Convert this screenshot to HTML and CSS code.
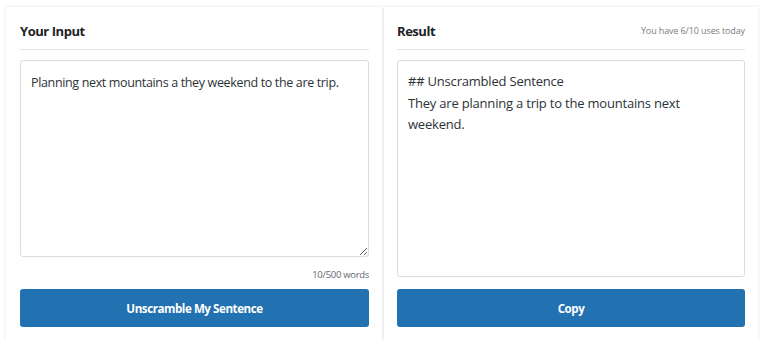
FILE: index.html
```html
<!DOCTYPE html>
<html>
<head>
<meta charset="utf-8">
<link rel="stylesheet" href="styles.css">
</head>
<body>
<div class="wrap">
  <section class="card">
    <div class="head">
      <h2 class="title">Your Input</h2>
    </div>
    <textarea class="input">Planning next mountains a they weekend to the are trip.</textarea>
    <div class="count">10/500 words</div>
    <button class="btn">Unscramble My Sentence</button>
  </section>
  <section class="card">
    <div class="head">
      <h2 class="title">Result</h2>
      <span class="uses">You have 6/10 uses today</span>
    </div>
    <div class="result">## Unscrambled Sentence<br>They are planning a trip to the mountains next weekend.</div>
    <button class="btn">Copy</button>
  </section>
</div>
</body>
</html>
```
FILE: styles.css
```css
html, body {
  margin: 0;
  padding: 0;
  background: #ffffff;
  font-family: "Open Sans", "Noto Sans", sans-serif;
  color: #1d2327;
}
.wrap {
  display: grid;
  grid-template-columns: 376px 374px;
  column-gap: 2px;
  padding: 7px 0 0 6px;
}
.card {
  background: #fff;
  box-shadow: 0 0 3px rgba(0,0,0,0.12);
  padding: 0 13px 13px 14px;
  display: flex;
  flex-direction: column;
  height: 320px;
}
.card + .card {
  padding-left: 13px;
}
.head {
  box-sizing: border-box;
  display: flex;
  align-items: center;
  justify-content: space-between;
  height: 43px;
  padding-top: 5px;
  border-bottom: 1px solid #e2e4e7;
  margin-bottom: 10px;
}
.title {
  margin: 0;
  font-size: 13px;
  font-weight: 700;
  letter-spacing: -0.45px;
  color: #1d2327;
}
.uses {
  font-size: 9px;
  letter-spacing: -0.12px;
  color: #787c82;
}
.input {
  box-sizing: border-box;
  height: 197px;
  width: 100%;
  border: 1px solid #dcdcde;
  border-radius: 3px;
  padding: 11px 10px;
  font-family: inherit;
  font-size: 12.5px;
  letter-spacing: -0.35px;
  line-height: 21px;
  color: #2c3338;
  resize: vertical;
  margin: 0;
}
.count {
  text-align: right;
  font-size: 9.5px;
  letter-spacing: -0.3px;
  color: #646970;
  height: 31px;
  line-height: 35px;
}
.result {
  box-sizing: border-box;
  height: 217px;
  border: 1px solid #dcdcde;
  border-radius: 3px;
  padding: 10px 30px 10px 10px;
  font-size: 13px;
  letter-spacing: -0.2px;
  line-height: 21.5px;
  color: #2c3338;
  margin-bottom: 11px;
}
.btn {
  height: 38px;
  width: 100%;
  border: none;
  border-radius: 3px;
  background: #2271b1;
  color: #fff;
  font-family: inherit;
  font-size: 11.6px;
  font-weight: 700;
  letter-spacing: -0.45px;
  margin-top: auto;
}
```
